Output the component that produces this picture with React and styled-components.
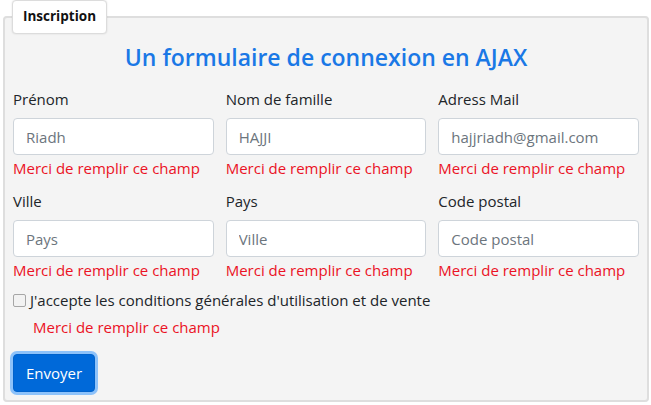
import React from "react";
import styled, { createGlobalStyle } from "styled-components";

const GlobalStyle = createGlobalStyle`
  * { box-sizing: border-box; }
  body {
    margin: 0;
    background: #ffffff;
    font-family: "Open Sans", "Noto Sans", "Liberation Sans", sans-serif;
    color: #212529;
  }
`;

const Page = styled.div`
  padding: 0 2px 0 3px;
`;

const Fieldset = styled.fieldset`
  margin: 0;
  padding: 0 8px 8px 8px;
  background: #f4f4f4;
  border: 2px solid #dedede;
  border-radius: 4px;
  min-width: 0;
`;

const Legend = styled.legend`
  margin-left: -1px;
  padding: 6px 10px 7px 10px;
  background: #ffffff;
  border: 1px solid #dcdcdc;
  border-radius: 4px;
  box-shadow: 0 0 2px rgba(0, 0, 0, 0.12);
  font-size: 13.5px;
  font-weight: 700;
  line-height: 19px;
  color: #111;
`;

const Title = styled.h4`
  margin: 8px 0 15px;
  text-align: center;
  font-size: 23px;
  font-weight: 600;
  line-height: 30px;
  color: #1a78e6;
`;

const Grid = styled.div`
  display: grid;
  grid-template-columns: repeat(3, minmax(0, 1fr));
  column-gap: 12px;
  row-gap: 9px;
`;

const Field = styled.div`
  display: flex;
  flex-direction: column;
  min-width: 0;
`;

const Label = styled.label`
  font-size: 15px;
  line-height: 24px;
  margin-bottom: 7px;
`;

const Input = styled.input`
  width: 100%;
  min-width: 0;
  height: 37px;
  padding: 0 12px;
  font-family: inherit;
  font-size: 15px;
  color: #495057;
  background: #ffffff;
  border: 1px solid #ced4da;
  border-radius: 4px;
  outline: none;
  &::placeholder { color: #6c757d; }
`;

const Error = styled.span`
  display: block;
  margin-top: ${(p) => (p.$indent ? "3px" : "1px")};
  padding-left: ${(p) => (p.$indent ? "20px" : "0")};
  font-size: 15px;
  line-height: 24px;
  color: #eb1225;
  white-space: nowrap;
`;

const Check = styled.label`
  display: flex;
  align-items: center;
  margin-top: 6px;
  font-size: 15px;
  line-height: 24px;
`;

const Box = styled.input`
  appearance: none;
  width: 13px;
  height: 13px;
  margin: 0 4px 0 0;
  background: #f2f2f2;
  border: 1px solid #a6a6a6;
  border-radius: 2px;
`;

const Button = styled.button`
  margin: 15px 0 0;
  height: 38px;
  padding: 0 12px;
  font-family: inherit;
  font-size: 15px;
  color: #ffffff;
  background: #0069d9;
  border: 1px solid #0062cc;
  border-radius: 4px;
  box-shadow: 0 0 0 3px rgba(38, 143, 255, 0.5);
  cursor: pointer;
`;

const fields = [
  { label: "Prénom", placeholder: "Riadh" },
  { label: "Nom de famille", placeholder: "HAJJI" },
  { label: "Adress Mail", placeholder: "hajjriadh@gmail.com" },
  { label: "Ville", placeholder: "Pays" },
  { label: "Pays", placeholder: "Ville" },
  { label: "Code postal", placeholder: "Code postal" },
];

const MSG = "Merci de remplir ce champ";

export default function App() {
  return (
    <Page>
      <GlobalStyle />
      <form onSubmit={(e) => e.preventDefault()}>
        <Fieldset>
          <Legend>Inscription</Legend>
          <Title>Un formulaire de connexion en AJAX</Title>
          <Grid>
            {fields.map((f) => (
              <Field key={f.label}>
                <Label>{f.label}</Label>
                <Input placeholder={f.placeholder} />
                <Error>{MSG}</Error>
              </Field>
            ))}
          </Grid>
          <Check>
            <Box type="checkbox" />
            J'accepte les conditions générales d'utilisation et de vente
          </Check>
          <Error $indent>{MSG}</Error>
          <div>
            <Button type="submit">Envoyer</Button>
          </div>
        </Fieldset>
      </form>
    </Page>
  );
}
